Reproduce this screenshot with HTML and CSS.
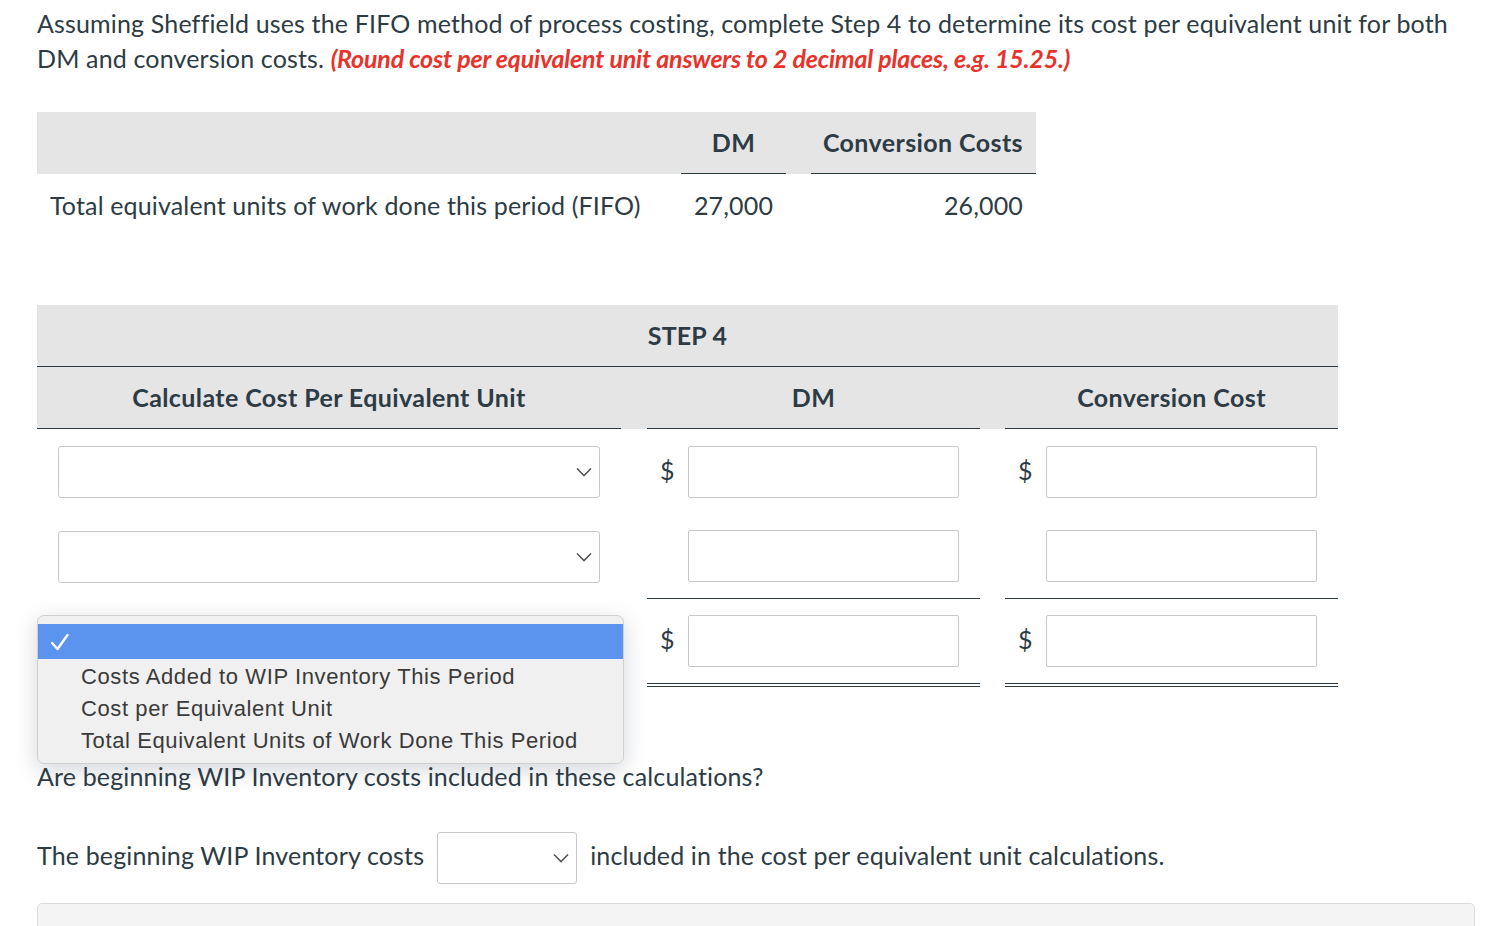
FILE: index.html
```html
<!DOCTYPE html>
<html lang="en">
<head>
    <meta charset="UTF-8">
    <meta name="viewport" content="width=device-width, initial-scale=1.0">
    <title>Step 4 - Cost per Equivalent Unit</title>
    <link rel="stylesheet" href="styles.css">
</head>
<body>
    <div class="question">
        <p class="prompt">
            Assuming Sheffield uses the FIFO method of process costing, complete Step 4 to determine its cost per equivalent unit for both DM and conversion costs.
            <span class="note">(Round cost per equivalent unit answers to 2 decimal places, e.g. 15.25.)</span>
        </p>

        <div class="units-table">
            <div class="units-head">
                <div class="cell"></div>
                <div class="cell center ruled">DM</div>
                <div class="cell"></div>
                <div class="cell right ruled">Conversion Costs</div>
            </div>
            <div class="units-row">
                <div class="cell label">Total equivalent units of work done this period (FIFO)</div>
                <div class="cell center">27,000</div>
                <div class="cell"></div>
                <div class="cell right">26,000</div>
            </div>
        </div>

        <div class="step-table">
            <div class="step-title">STEP 4</div>
            <div class="step-head">
                <div class="cell center ruled">Calculate Cost Per Equivalent Unit</div>
                <div class="cell"></div>
                <div class="cell center ruled">DM</div>
                <div class="cell"></div>
                <div class="cell center ruled">Conversion Cost</div>
            </div>

            <div class="step-row">
                <div class="cell pick">
                    <div class="select wide">
                        <svg class="chevron" width="16" height="10" viewBox="0 0 16 10"><path d="M1 1.5 L8 8.5 L15 1.5" fill="none" stroke="#555" stroke-width="1.6"/></svg>
                    </div>
                </div>
                <div class="cell"></div>
                <div class="cell money"><span class="dollar">$</span><div class="field"></div></div>
                <div class="cell"></div>
                <div class="cell money"><span class="dollar">$</span><div class="field"></div></div>
            </div>

            <div class="step-row">
                <div class="cell pick">
                    <div class="select wide">
                        <svg class="chevron" width="16" height="10" viewBox="0 0 16 10"><path d="M1 1.5 L8 8.5 L15 1.5" fill="none" stroke="#555" stroke-width="1.6"/></svg>
                    </div>
                </div>
                <div class="cell"></div>
                <div class="cell money ruled"><span class="dollar"></span><div class="field"></div></div>
                <div class="cell"></div>
                <div class="cell money ruled"><span class="dollar"></span><div class="field"></div></div>
            </div>

            <div class="step-row last">
                <div class="cell pick open">
                    <div class="select wide"></div>
                    <ul class="menu">
                        <li class="chosen">
                            <svg width="20" height="18" viewBox="0 0 20 18"><path d="M2 10 L7.5 16 L17.5 2" fill="none" stroke="#fff" stroke-width="2.4" stroke-linecap="round" stroke-linejoin="round"/></svg>
                        </li>
                        <li>Costs Added to WIP Inventory This Period</li>
                        <li>Cost per Equivalent Unit</li>
                        <li>Total Equivalent Units of Work Done This Period</li>
                    </ul>
                </div>
                <div class="cell"></div>
                <div class="cell money total"><span class="dollar">$</span><div class="field"></div></div>
                <div class="cell"></div>
                <div class="cell money total"><span class="dollar">$</span><div class="field"></div></div>
            </div>
        </div>

        <p class="ask">Are beginning WIP Inventory costs included in these calculations?</p>

        <div class="sentence">
            <span>The beginning WIP Inventory costs</span>
            <div class="select small">
                <svg class="chevron" width="16" height="10" viewBox="0 0 16 10"><path d="M1 1.5 L8 8.5 L15 1.5" fill="none" stroke="#555" stroke-width="1.6"/></svg>
            </div>
            <span>included in the cost per equivalent unit calculations.</span>
        </div>

        <div class="panel">
            <p>The physical units of work done this period</p>
        </div>
    </div>
</body>
</html>
```

FILE: styles.css
```css
* {
    margin: 0;
    padding: 0;
    box-sizing: border-box;
}

body {
    font-family: 'Lato', 'Noto Sans', sans-serif;
    color: #2d3b45;
    background-color: #fff;
    font-size: 25px;
    letter-spacing: 0.15px;
    line-height: 35px;
    overflow: hidden;
}

.question {
    padding: 6px 24px 0 37px;
}

.prompt {
    width: 1420px;
}

.note {
    color: #e8322a;
    font-weight: bold;
    font-style: italic;
    letter-spacing: -0.2px;
}

.cell {
    display: flex;
    align-items: center;
}

.center {
    justify-content: center;
}

.right {
    justify-content: flex-end;
    padding-right: 13px;
}

/* equivalent units table */
.units-table {
    margin-top: 36px;
    width: 999px;
}

.units-head,
.units-row {
    display: grid;
    grid-template-columns: 644px 105px 25px 225px;
}

.units-head {
    background-color: #e5e5e5;
    height: 62px;
    font-weight: bold;
    letter-spacing: 0.4px;
}

.units-head .ruled {
    border-bottom: 1px solid #2d3b45;
}

.units-row {
    height: 62px;
}

.units-row .label {
    padding-left: 13px;
}

/* step 4 table */
.step-table {
    margin-top: 69px;
    width: 1301px;
}

.step-title {
    background-color: #e5e5e5;
    height: 62px;
    line-height: 61px;
    text-align: center;
    font-weight: bold;
    border-bottom: 1px solid #2d3b45;
}

.step-head,
.step-row {
    display: grid;
    grid-template-columns: 584px 26px 333px 25px 333px;
}

.step-head {
    background-color: #e5e5e5;
    height: 62px;
    font-weight: bold;
    letter-spacing: 0.4px;
}

.step-head .ruled {
    border-bottom: 1px solid #2d3b45;
}

.step-row {
    height: 85px;
}

.step-row .ruled {
    border-bottom: 1px solid #2d3b45;
}

.step-row.last {
    height: 88px;
}

.step-row .total {
    border-bottom: 4px double #2d3b45;
    align-items: flex-start;
    padding-top: 16px;
}

.total .dollar {
    line-height: 48px;
}

.pick {
    padding: 0 21px;
    position: relative;
}

.select {
    display: flex;
    align-items: center;
    justify-content: flex-end;
    height: 52px;
    border: 1px solid #c8c8c8;
    border-radius: 3px;
    background-color: #fff;
    padding-right: 7px;
}

.select.wide {
    width: 542px;
}

.open .select {
    margin-top: -1px;
}

.select.small {
    width: 140px;
    margin: 0 13px;
}

.money {
    padding-left: 13px;
}

.dollar {
    width: 28px;
    flex-shrink: 0;
    letter-spacing: 0;
    margin-bottom: 3px;
}

.field {
    width: 271px;
    height: 52px;
    border: 1px solid #c8c8c8;
    border-radius: 2px;
    background-color: #fff;
}

/* open dropdown list */
.menu {
    list-style: none;
    position: absolute;
    left: 0;
    top: 16px;
    width: 587px;
    height: 149px;
    padding: 8px 0;
    background-color: #f0f0f0;
    border: 1px solid #d0d0d0;
    border-radius: 7px;
    box-shadow: 0 6px 22px rgba(60, 70, 90, 0.22);
    font-family: 'Liberation Sans', 'Noto Sans', sans-serif;
    font-size: 22px;
    letter-spacing: 0.6px;
    color: #3a3a3a;
}

.menu li {
    height: 32px;
    line-height: 36px;
    padding-left: 43px;
}

.menu .chosen {
    height: 35px;
    padding-left: 12px;
    background-color: #5a94ee;
    display: flex;
    align-items: center;
}

.ask {
    margin-top: 72px;
}

.sentence {
    display: flex;
    align-items: center;
    margin-top: 38px;
}

.sentence span {
    margin-bottom: 5px;
}

.panel {
    margin-top: 19px;
    width: 1438px;
    height: 120px;
    background-color: #f4f4f4;
    border: 1px solid #dcdcdc;
    border-radius: 5px;
    padding: 22px 40px;
}
```
